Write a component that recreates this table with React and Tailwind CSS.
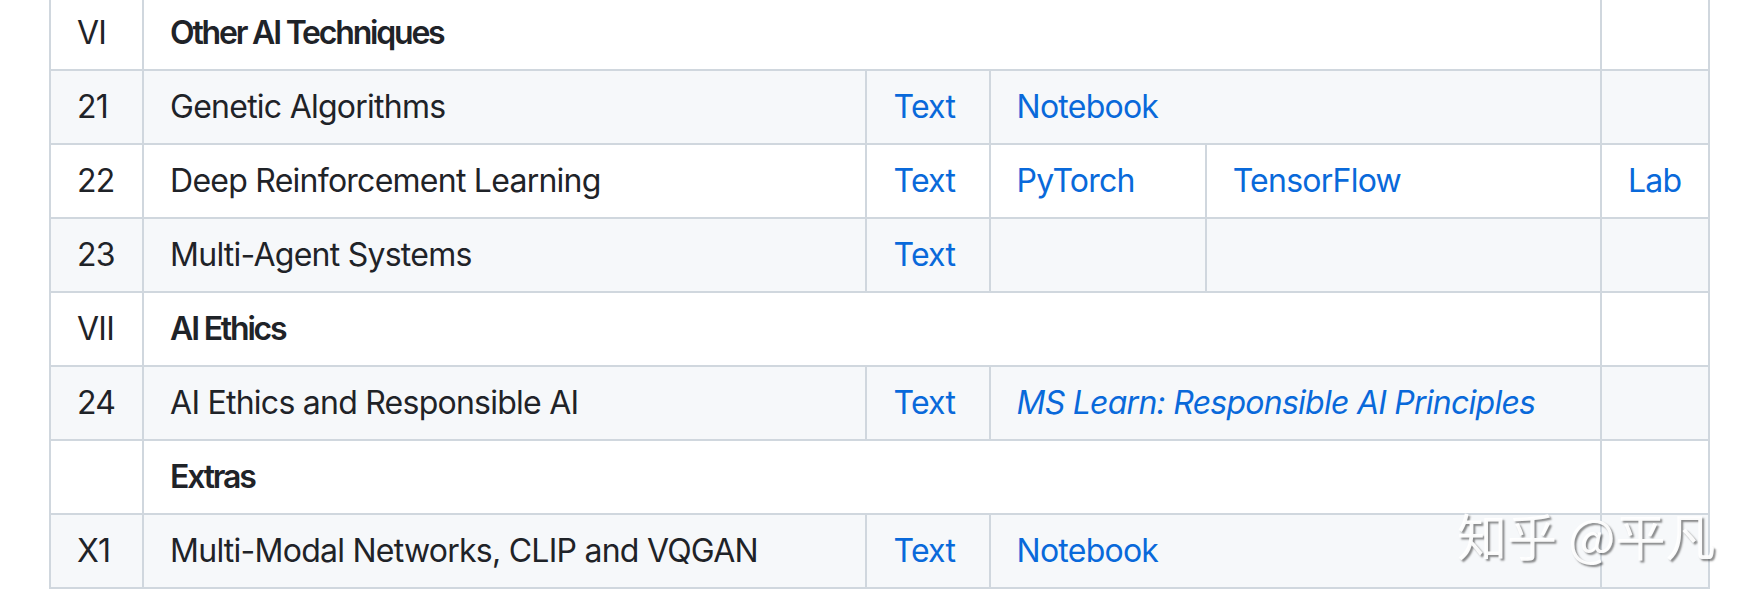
import React from 'react';

// Lesson table (fragment of a curriculum README), rendered at 2x scale
const FONT = { fontFamily: 'Inter, "Noto Sans", sans-serif' };

const cell = 'border-2 border-[#d0d7de] px-[26px] py-3 leading-[48px] align-middle';
const link = 'text-[#0969da]';

function Section({ num, title }) {
  return (
    <tr className="bg-white">
      <td className={cell}>{num}</td>
      <td className={`${cell} font-semibold tracking-[-2.2px]`} colSpan={4}>
        {title}
      </td>
      <td className={cell} />
    </tr>
  );
}

function Row({ num, title, children, alt }) {
  return (
    <tr className={alt ? 'bg-[#f6f8fa]' : 'bg-white'}>
      <td className={cell}>{num}</td>
      <td className={cell}>{title}</td>
      {children}
    </tr>
  );
}

export default function App() {
  return (
    <div
      className="relative w-[1760px] h-[610px] overflow-hidden bg-white text-[#1f2328] text-[32px] tracking-[-0.75px]"
      style={FONT}
    >
      <div className="pl-[49px] -mt-[5px]">
        <table className="table-fixed border-collapse w-[1661px]">
          <colgroup>
            <col className="w-[93px]" />
            <col className="w-[723px]" />
            <col className="w-[123px]" />
            <col className="w-[216px]" />
            <col className="w-[395px]" />
            <col className="w-[108px]" />
          </colgroup>
          <tbody>
            <Section num="VI" title="Other AI Techniques" />
            <Row num="21" title="Genetic Algorithms" alt>
              <td className={cell}><span className={link}>Text</span></td>
              <td className={cell} colSpan={2}><span className={link}>Notebook</span></td>
              <td className={cell} />
            </Row>
            <Row num="22" title="Deep Reinforcement Learning">
              <td className={cell}><span className={link}>Text</span></td>
              <td className={cell}><span className={link}>PyTorch</span></td>
              <td className={cell}><span className={link}>TensorFlow</span></td>
              <td className={cell}><span className={link}>Lab</span></td>
            </Row>
            <Row num="23" title="Multi-Agent Systems" alt>
              <td className={cell}><span className={link}>Text</span></td>
              <td className={cell} />
              <td className={cell} />
              <td className={cell} />
            </Row>
            <Section num="VII" title="AI Ethics" />
            <Row num="24" title="AI Ethics and Responsible AI" alt>
              <td className={cell}><span className={link}>Text</span></td>
              <td className={cell} colSpan={2}>
                <em className={link}>MS Learn: Responsible AI Principles</em>
              </td>
              <td className={cell} />
            </Row>
            <Section num="" title="Extras" />
            <Row num="X1" title="Multi-Modal Networks, CLIP and VQGAN" alt>
              <td className={cell}><span className={link}>Text</span></td>
              <td className={cell} colSpan={2}><span className={link}>Notebook</span></td>
              <td className={cell} />
            </Row>
          </tbody>
        </table>
      </div>

      {/* watermark */}
      <span
        className="absolute left-[1457px] top-[509px] text-[50px] leading-none tracking-normal text-white/95 whitespace-nowrap"
        style={{
          fontFamily: '"Noto Sans CJK SC", sans-serif',
          textShadow: '2px 2px 2px rgba(0,0,0,0.45)',
        }}
      >
        知乎 @平凡
      </span>
    </div>
  );
}
